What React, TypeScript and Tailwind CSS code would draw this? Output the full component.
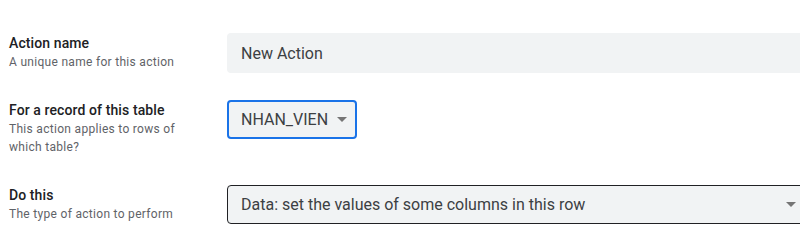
import React from 'react'

function Caret() {
  return (
    <svg width="10" height="5" viewBox="0 0 10 5" className="shrink-0">
      <path d="M0 0h10L5 5z" fill="#757575" />
    </svg>
  )
}

function Row({
  label,
  hint,
  children,
  className,
}: {
  label: string
  hint: React.ReactNode
  children: React.ReactNode
  className?: string
}) {
  return (
    <div className={'flex items-start ' + (className ?? '')}>
      <div className="w-[218px] shrink-0">
        <p className="text-[14px] font-medium leading-[20px] tracking-[0.1px] text-[#202124]">{label}</p>
        <p className="text-[12px] leading-[18px] tracking-[0.3px] text-[#5f6368]">{hint}</p>
      </div>
      {children}
    </div>
  )
}

export default function App() {
  return (
    <div
      className="h-[234px] w-[800px] overflow-hidden bg-white pl-[9px] pt-[33px]"
      style={{ fontFamily: 'Roboto, "Liberation Sans", sans-serif' }}
    >
      <Row label="Action name" hint="A unique name for this action">
        <div className="flex h-[40px] w-[580px] shrink-0 items-center rounded-[4px] bg-[#f1f3f4] px-[14px] pt-[2px] text-[16px] text-[#3c4043]">
          New Action
        </div>
      </Row>

      <Row
        className="mt-[27px]"
        label="For a record of this table"
        hint={
          <>
            This action applies to rows of
            <br />
            which table?
          </>
        }
      >
        <div className="flex h-[39px] shrink-0 items-center gap-[9px] rounded-[4px] border-2 border-[#1a73e8] bg-[#f1f3f4] pl-[12px] pr-[8px] text-[16px] text-[#3c4043]">
          <span>NHAN_VIEN</span>
          <Caret />
        </div>
      </Row>

      <Row className="mt-[29px]" label="Do this" hint="The type of action to perform">
        <div className="flex h-[39px] w-[580px] shrink-0 items-center justify-between rounded-[4px] border border-[#202124] bg-[#f1f3f4] pl-[13px] pr-[10px] text-[16px] text-[#3c4043]">
          <span>Data: set the values of some columns in this row</span>
          <Caret />
        </div>
      </Row>
    </div>
  )
}
